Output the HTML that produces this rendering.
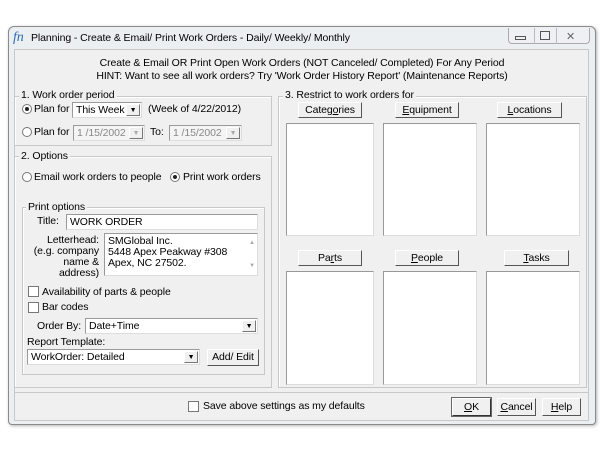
<!DOCTYPE html>
<html><head><style>
*{box-sizing:border-box;margin:0;padding:0}
body{width:604px;height:452px;background:#fff;position:relative;overflow:hidden;font-family:"Liberation Sans",sans-serif;font-size:10.5px;letter-spacing:-0.1px;color:#000}
.a{position:absolute}
.win{left:8px;top:26px;width:588px;height:399px;background:#eceff2;border:1px solid #8a8a8a;border-radius:6px 6px 4px 4px;box-shadow:1px 1px 3px rgba(0,0,0,.3)}
.client{left:14px;top:49px;width:575px;height:372px;background:#f0f0f0;border:1px solid #c8c8c8}
.grp{border:1px solid #c8c8c8;box-shadow:inset 1px 1px 0 #fff}
.leg{background:#f0f0f0;padding:0 2px;line-height:12px}
.inp{background:#fff;border:1px solid #9a9a9a;border-right-color:#ddd;border-bottom-color:#ddd;padding-left:3px;line-height:14px;white-space:nowrap;overflow:hidden}
.dis{background:#f4f4f4;color:#888}
.btn{background:#f0f0f0;border:1px solid;border-color:#fff #555 #555 #fff;text-align:center;line-height:14px}
.dd{position:absolute;right:1px;top:1px;width:14px;bottom:1px;background:#f0f0f0;border:1px solid;border-color:#fff #777 #777 #fff;font-size:7px;text-align:center;line-height:12px}
.rad{width:10px;height:10px;border:1px solid #777;border-radius:50%;background:#fff}
.rad.on::after{content:"";position:absolute;left:2px;top:2px;width:4px;height:4px;border-radius:50%;background:#222}
.chk{width:11px;height:11px;border:1px solid #777;background:#fff}
.list{background:#fff;border:1px solid #999;border-right-color:#ddd;border-bottom-color:#ddd}
u{text-decoration:underline}
</style></head><body>
<div class="a win"></div>
<div class="a" style="left:13px;top:30px;font-family:'Liberation Serif',serif;font-size:14px;color:#2d6db5;font-style:italic">fn</div>
<div class="a" style="left:31px;top:32px">Planning - Create &amp; Email/ Print Work Orders - Daily/ Weekly/ Monthly</div>
<div class="a" style="left:508px;top:28px;width:82px;height:16px;border:1px solid #aaa;border-top:none;border-radius:0 0 4px 4px;background:#eef0f3"></div>
<div class="a" style="left:534px;top:28px;width:1px;height:16px;background:#bbb"></div>
<div class="a" style="left:556px;top:28px;width:1px;height:16px;background:#bbb"></div>
<div class="a" style="left:515px;top:36px;width:11px;height:4px;border:1px solid #555"></div>
<div class="a" style="left:540px;top:31px;width:10px;height:9px;border:1px solid #555"></div>
<div class="a" style="left:566px;top:30px;font-size:11px;color:#666">✕</div>
<div class="a client"></div>
<div class="a" style="left:0;width:604px;top:57px;text-align:center;line-height:13px">Create &amp; Email OR Print Open Work Orders (NOT Canceled/ Completed) For Any Period<br>HINT: Want to see all work orders? Try 'Work Order History Report' (Maintenance Reports)</div>

<div class="a grp" style="left:14px;top:96px;width:258px;height:50px"></div>
<div class="a leg" style="left:19px;top:89px">1. Work order period</div>
<div class="a rad on" style="left:22px;top:104px"></div>
<div class="a" style="left:34px;top:103px">Plan for</div>
<div class="a inp" style="left:72px;top:102px;width:70px;height:16px">This Week<div class="dd">▼</div></div>
<div class="a" style="left:148px;top:103px">(Week of 4/22/2012)</div>
<div class="a rad" style="left:22px;top:127px"></div>
<div class="a" style="left:34px;top:126px">Plan for</div>
<div class="a inp dis" style="left:73px;top:125px;width:72px;height:16px">1 /15/2002<div class="dd" style="color:#aaa">▼</div></div>
<div class="a" style="left:150px;top:126px">To:</div>
<div class="a inp dis" style="left:169px;top:125px;width:73px;height:16px">1 /15/2002<div class="dd" style="color:#aaa">▼</div></div>

<div class="a grp" style="left:14px;top:156px;width:258px;height:232px"></div>
<div class="a leg" style="left:19px;top:150px">2. Options</div>
<div class="a rad" style="left:22px;top:172px"></div>
<div class="a" style="left:34px;top:171px">Email work orders to people</div>
<div class="a rad on" style="left:170px;top:172px"></div>
<div class="a" style="left:183px;top:171px">Print work orders</div>

<div class="a grp" style="left:22px;top:207px;width:243px;height:168px"></div>
<div class="a leg" style="left:26px;top:201px">Print options</div>
<div class="a" style="left:37px;top:215px">Title:</div>
<div class="a inp" style="left:66px;top:214px;width:192px;height:16px">WORK ORDER</div>
<div class="a" style="left:18px;top:235px;width:81px;text-align:right;line-height:11px">Letterhead:<br>(e.g. company<br>name &amp;<br>address)</div>
<div class="a inp" style="left:104px;top:233px;width:154px;height:43px;line-height:11px;padding-top:2px">SMGlobal Inc.<br>5448 Apex Peakway #308<br>Apex, NC 27502.<div class="a" style="right:2px;top:4px;font-size:6px;color:#aaa">▲</div><div class="a" style="right:2px;bottom:3px;font-size:6px;color:#aaa">▼</div></div>
<div class="a chk" style="left:28px;top:286px"></div>
<div class="a" style="left:42px;top:286px">Availability of parts &amp; people</div>
<div class="a chk" style="left:28px;top:302px"></div>
<div class="a" style="left:42px;top:301px">Bar codes</div>
<div class="a" style="left:37px;top:320px">Order By:</div>
<div class="a inp" style="left:85px;top:318px;width:173px;height:16px">Date+Time<div class="dd">▼</div></div>
<div class="a" style="left:27px;top:336px">Report Template:</div>
<div class="a inp" style="left:27px;top:349px;width:173px;height:16px">WorkOrder: Detailed<div class="dd">▼</div></div>
<div class="a btn" style="left:207px;top:349px;width:52px;height:17px">Add/ Edit</div>

<div class="a grp" style="left:278px;top:96px;width:309px;height:292px"></div>
<div class="a leg" style="left:283px;top:89px">3. Restrict to work orders for</div>
<div class="a btn" style="left:298px;top:102px;width:64px;height:16px">Categ<u>o</u>ries</div>
<div class="a btn" style="left:395px;top:102px;width:64px;height:16px"><u>E</u>quipment</div>
<div class="a btn" style="left:497px;top:102px;width:65px;height:16px"><u>L</u>ocations</div>
<div class="a list" style="left:286px;top:123px;width:88px;height:113px"></div>
<div class="a list" style="left:383px;top:123px;width:94px;height:113px"></div>
<div class="a list" style="left:486px;top:123px;width:94px;height:113px"></div>
<div class="a btn" style="left:298px;top:250px;width:64px;height:16px">Pa<u>r</u>ts</div>
<div class="a btn" style="left:395px;top:250px;width:64px;height:16px"><u>P</u>eople</div>
<div class="a btn" style="left:504px;top:250px;width:65px;height:16px"><u>T</u>asks</div>
<div class="a list" style="left:286px;top:271px;width:88px;height:114px"></div>
<div class="a list" style="left:383px;top:271px;width:94px;height:114px"></div>
<div class="a list" style="left:486px;top:271px;width:94px;height:114px"></div>

<div class="a" style="left:15px;top:392px;width:573px;height:1px;background:#c8c8c8"></div>
<div class="a chk" style="left:188px;top:401px"></div>
<div class="a" style="left:203px;top:400px">Save above settings as my defaults</div>
<div class="a btn" style="left:452px;top:398px;width:39px;height:18px;border-color:#fff #333 #333 #fff;line-height:16px;outline:1px solid #666"><u>O</u>K</div>
<div class="a btn" style="left:497px;top:398px;width:39px;height:18px;line-height:16px"><u>C</u>ancel</div>
<div class="a btn" style="left:542px;top:398px;width:39px;height:18px;line-height:16px"><u>H</u>elp</div>
</body></html>
